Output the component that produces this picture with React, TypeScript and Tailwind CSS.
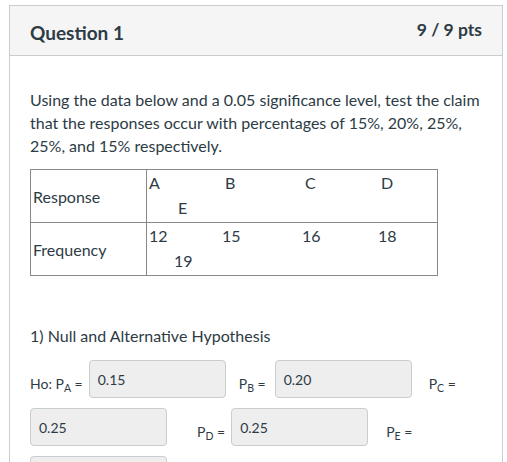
const text = "text-[#2d3b45]";

const Field = ({ value, className = "" }: { value?: string; className?: string }) => (
  <div
    className={`w-[137px] h-[38px] shrink-0 rounded-[4px] border border-[#c7cdd1] bg-[#eeeeee] px-[8px] text-[14px] leading-[37px] ${text} ${className}`}
  >
    {value}
  </div>
);

const Label = ({ p, sub, pre, className = "" }: { p: string; sub: string; pre?: string; className?: string }) => (
  <span className={`mt-[14px] text-[14px] leading-[20px] whitespace-nowrap ${className}`}>
    {pre}
    {p}
    <sub>{sub}</sub> =
  </span>
);

const App = () => {
  return (
    <div className={`min-h-screen bg-white pt-[5px] pl-[9px] font-['Lato',sans-serif] ${text}`}>
      <div className="w-[494px] border border-[#c7cdd1]">
        {/* header */}
        <div className="h-[50px] flex justify-between items-start border-b border-[#c7cdd1] bg-[#f5f5f5] px-[20px]">
          <h2 className="pt-[15px] text-[19px] leading-[24px] font-bold">Question 1</h2>
          <div className="pt-[13px] text-[17.5px] leading-[22px] font-bold">9 / 9 pts</div>
        </div>

        {/* body */}
        <div className="px-[20px] pt-[32px] pb-[20px]">
          <p className="text-[16px] leading-[23px]">
            Using the data below and a 0.05 significance level, test the claim that the responses occur with
            percentages of 15%, 20%, 25%, 25%, and 15% respectively.
          </p>

          <table className="mt-[12px] w-[408px] border-collapse text-[16px] leading-[25px]">
            <tbody>
              <tr className="h-[53px]">
                <td className="w-[116px] border border-[#888] pl-[2px] align-middle">Response</td>
                <td className="border border-[#888] pl-[2px] align-top">
                  <div className="flex">
                    <span className="w-[76px]">A</span>
                    <span className="w-[80px]">B</span>
                    <span className="w-[76px]">C</span>
                    <span>D</span>
                  </div>
                  <div className="pl-[29px]">E</div>
                </td>
              </tr>
              <tr className="h-[53px]">
                <td className="border border-[#888] pl-[2px] align-middle">Frequency</td>
                <td className="border border-[#888] pl-[2px] align-top">
                  <div className="flex">
                    <span className="w-[73px]">12</span>
                    <span className="w-[80px]">15</span>
                    <span className="w-[76px]">16</span>
                    <span>18</span>
                  </div>
                  <div className="pl-[25px]">19</div>
                </td>
              </tr>
            </tbody>
          </table>

          <p className="mt-[48px] text-[16px] leading-[23px]">1) Null and Alternative Hypothesis</p>

          <div className="mt-[13px] flex flex-col gap-[10px]">
            <div className="flex items-start">
              <Label pre="Ho: " p="P" sub="A" />
              <Field value="0.15" className="ml-[6px]" />
              <Label p="P" sub="B" className="ml-[13px]" />
              <Field value="0.20" className="ml-[9px]" />
              <Label p="P" sub="C" className="ml-[17px]" />
            </div>
            <div className="flex items-start">
              <Field value="0.25" />
              <Label p="P" sub="D" className="ml-[30px]" />
              <Field value="0.25" className="ml-[6px]" />
              <Label p="P" sub="E" className="ml-[18px]" />
            </div>
            <div className="flex items-start">
              <Field />
            </div>
          </div>
        </div>
      </div>
    </div>
  );
};

export default App;
